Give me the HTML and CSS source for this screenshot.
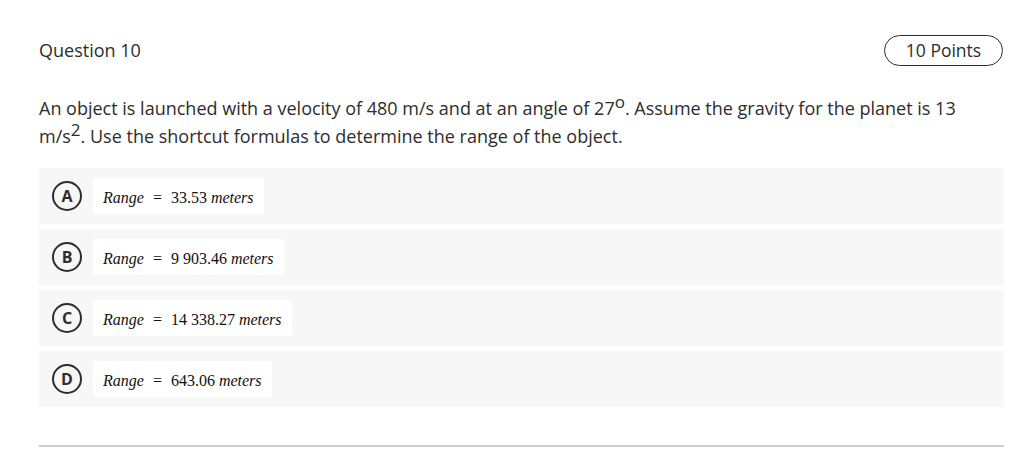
FILE: index.html
```html
<!DOCTYPE html>
<html>
<head>
<meta charset="utf-8">
<link rel="stylesheet" href="styles.css">
</head>
<body>
<div class="page">
  <div class="header">
    <div class="title">Question 10</div>
    <div class="points">10 Points</div>
  </div>
  <p class="question">An object is launched with a velocity of 480 m/s and at an angle of 27<sup>o</sup>. Assume the gravity for the planet is 13 m/s<sup>2</sup>. Use the shortcut formulas to determine the range of the object.</p>
  <div class="options">
    <div class="option"><span class="letter">A</span><span class="math"><i>Range</i><span class="eq">=</span>33.53 <i>meters</i></span></div>
    <div class="option"><span class="letter">B</span><span class="math"><i>Range</i><span class="eq">=</span>9 903.46 <i>meters</i></span></div>
    <div class="option"><span class="letter">C</span><span class="math"><i>Range</i><span class="eq">=</span>14 338.27 <i>meters</i></span></div>
    <div class="option"><span class="letter">D</span><span class="math"><i>Range</i><span class="eq">=</span>643.06 <i>meters</i></span></div>
  </div>
  <div class="rule"></div>
</div>
</body>
</html>
```

FILE: styles.css
```css
html, body {
  margin: 0;
  padding: 0;
  background: #ffffff;
}
.page {
  padding: 35px 30px 0 39px;
  font-family: "Open Sans", "Noto Sans", sans-serif;
  color: #2d2d2d;
}
.header {
  display: flex;
  justify-content: space-between;
  align-items: center;
  height: 30px;
}
.title {
  font-size: 18px;
  font-weight: 500;
}
.points {
  box-sizing: border-box;
  width: 119px;
  height: 31px;
  border: 1.5px solid #2d2d2d;
  border-radius: 16px;
  display: flex;
  align-items: center;
  justify-content: center;
  font-size: 17.5px;
  margin-right: 1px;
}
.question {
  margin: 29px 0 0 0;
  font-size: 18px;
  line-height: 28px;
  padding-right: 30px;
}
.question sup {
  font-size: 17px;
  line-height: 0;
  vertical-align: 7px;
}
.options {
  margin-top: 18px;
  display: flex;
  flex-direction: column;
  gap: 5px;
}
.option {
  height: 56px;
  background: #f7f7f7;
  display: flex;
  align-items: center;
  padding-left: 13px;
}
.letter {
  flex: 0 0 30px;
  box-sizing: border-box;
  width: 30px;
  height: 30px;
  border: 2.5px solid #2d2d2d;
  border-radius: 50%;
  display: flex;
  align-items: center;
  justify-content: center;
  font-size: 16px;
  font-weight: 700;
  margin-right: 11px;
}
.math {
  flex: 0 0 auto;
  background: #ffffff;
  height: 36px;
  display: flex;
  align-items: center;
  padding: 4px 10px 0 10px;
  box-sizing: border-box;
  font-family: "Liberation Serif", "Times New Roman", serif;
  font-size: 16px;
  color: #111;
  white-space: pre;
}
.math i {
  font-style: italic;
}
.eq {
  margin: 0 9px;
}
.rule {
  margin-top: 38px;
  height: 2px;
  background: #cccccc;
}
```
